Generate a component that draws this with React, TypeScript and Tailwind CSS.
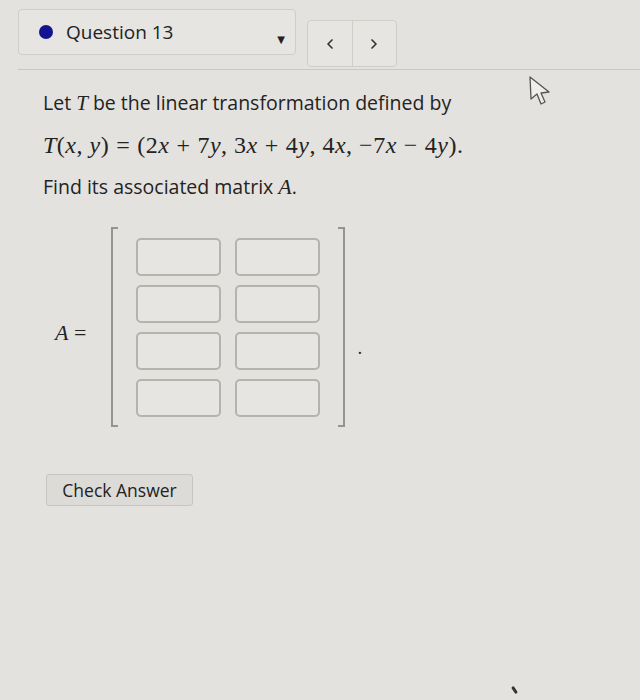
import { ChevronLeft, ChevronRight } from "lucide-react";

const sans = { fontFamily: '"Open Sans", "DejaVu Sans", sans-serif' };
const serif = { fontFamily: '"Liberation Serif", "DejaVu Serif", serif' };

function V({ children }: { children: string }) {
  return <i className="italic">{children}</i>;
}

function Op({ children }: { children: string }) {
  return <span className="mx-[7px]">{children}</span>;
}

function Cell() {
  return <div className="h-[38px] w-[85px] rounded-[5px] border-2 border-[#b4b3ae] bg-[#e6e5e1]" />;
}

export default function App() {
  return (
    <div className="relative min-h-[700px] w-[640px] overflow-hidden bg-[#e3e2de] text-[#232323]" style={sans}>
      {/* header */}
      <div className="flex items-start gap-[11px] pl-[18px] pt-[9px]">
        <div className="flex h-[46px] w-[278px] items-center rounded-[4px] border border-[#cfcec9] bg-[#e6e5e1] pl-[20px] pr-[10px]">
          <span className="h-[14px] w-[14px] rounded-full bg-[#13138f]" />
          <span className="ml-[13px] text-[19px] text-[#222]">Question 13</span>
          <span className="ml-auto mt-[14px] text-[10px] text-[#222]">▼</span>
        </div>
        <div className="mt-[11px] flex h-[47px] w-[90px] rounded-[4px] border border-[#cfcec9] bg-[#e6e5e1]">
          <div className="flex flex-1 items-center justify-center border-r border-[#cfcec9]">
            <ChevronLeft size={16} strokeWidth={2.5} className="text-[#333]" />
          </div>
          <div className="flex flex-1 items-center justify-center">
            <ChevronRight size={16} strokeWidth={2.5} className="text-[#333]" />
          </div>
        </div>
      </div>
      <div className="ml-[18px] mt-[2px] h-px w-[640px] bg-[#c9c8c3]" />

      {/* question */}
      <div className="relative pl-[43px] pt-[20px]">
        <p className="text-[19.5px] leading-[26px]">
          Let <span className="text-[21px]" style={serif}><V>T</V></span> be the linear transformation defined by
        </p>
        <p className="mt-[16px] text-[24px] leading-[26px] tracking-[0.5px]" style={serif}>
          <V>T</V>(<V>x</V>, <V>y</V>)<Op>=</Op>(2<V>x</V><Op>+</Op>7<V>y</V>, 3<V>x</V><Op>+</Op>4<V>y</V>, 4<V>x</V>, −7<V>x</V><Op>−</Op>4<V>y</V>).
        </p>
        <p className="mt-[16px] text-[19.5px] leading-[26px]">
          Find its associated matrix <span className="text-[22px]" style={serif}><V>A</V></span>.
        </p>
        <svg className="absolute left-[526px] top-[4px]" width="32" height="34" viewBox="0 0 32 34">
          <path d="M4 3 L5 25 L11 20 L15 30 L19 28 L15 19 L23 18 Z" fill="#efeeeb" stroke="#555" strokeWidth="1.3" strokeLinejoin="round" />
        </svg>
      </div>

      {/* matrix */}
      <div className="mt-[27px] flex items-center pl-[55px]">
        <span className="mt-[10px] text-[22px]" style={serif}>
          <V>A</V> =
        </span>
        <div className="ml-[25px] flex h-[200px] items-stretch">
          <div className="w-[7px] border-y-2 border-l-2 border-[#959490]" />
          <div className="grid grid-cols-2 gap-x-[14px] gap-y-[9px] px-[18px] py-[11px]">
            {Array.from({ length: 8 }).map((_, i) => (
              <Cell key={i} />
            ))}
          </div>
          <div className="w-[7px] border-y-2 border-r-2 border-[#959490]" />
        </div>
        <span className="ml-[12px] mt-[40px] text-[18px]">.</span>
      </div>

      {/* button */}
      <div className="mt-[47px] pl-[46px]">
        <button className="h-[32px] w-[147px] rounded-[3px] border border-[#c6c5c0] bg-[#dcdbd7] text-[17.5px] text-[#222]">
          Check Answer
        </button>
      </div>

      <span className="absolute left-[513px] top-[686px] h-[8px] w-[3px] rotate-[-35deg] rounded-full bg-[#333]" />
    </div>
  );
}
